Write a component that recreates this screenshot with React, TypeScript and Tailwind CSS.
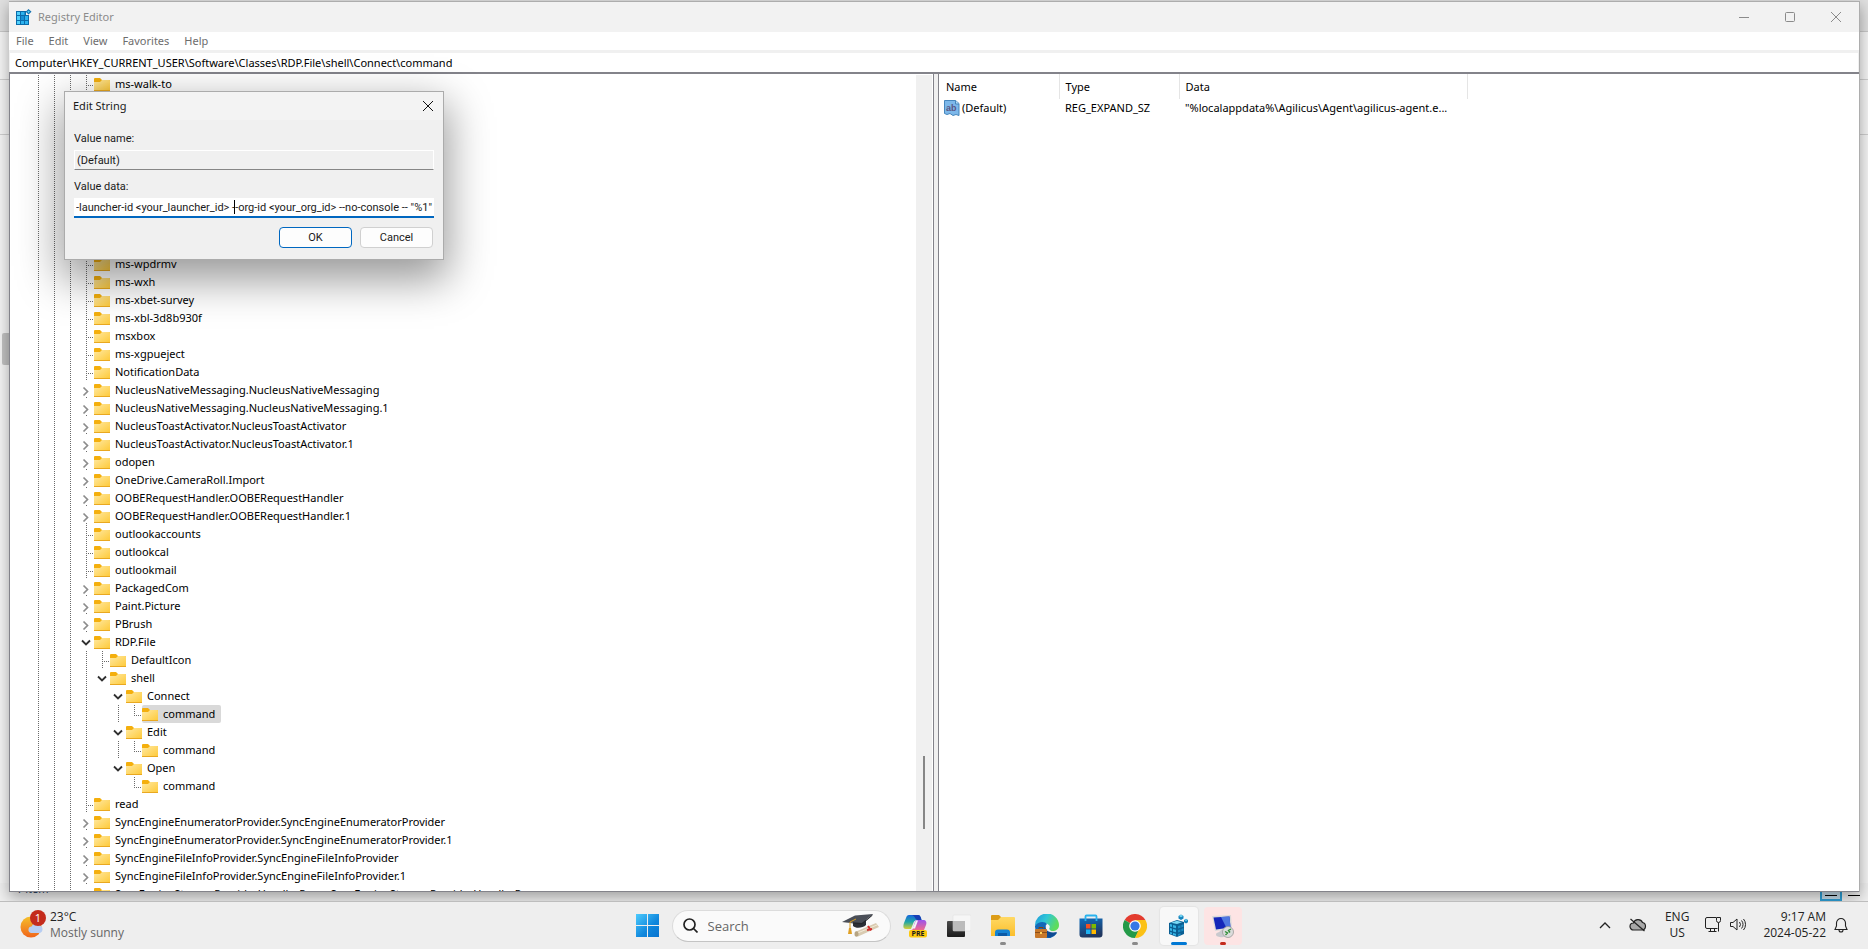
import { ReactNode } from "react";

type Branch = "leaf" | "last" | "closed" | "open";

interface TreeItem {
  name: string;
  branch?: Branch;
  // guide line under each ancestor between the root guides and this item
  guides?: boolean[];
  selected?: boolean;
}

const treeItems: TreeItem[] = [
  { name: "ms-walk-to" },
  ...Array.from({ length: 9 }, () => ({ name: "" })),
  { name: "ms-wpdrmv" },
  { name: "ms-wxh" },
  { name: "ms-xbet-survey" },
  { name: "ms-xbl-3d8b930f" },
  { name: "msxbox" },
  { name: "ms-xgpueject" },
  { name: "NotificationData" },
  { name: "NucleusNativeMessaging.NucleusNativeMessaging", branch: "closed" },
  { name: "NucleusNativeMessaging.NucleusNativeMessaging.1", branch: "closed" },
  { name: "NucleusToastActivator.NucleusToastActivator", branch: "closed" },
  { name: "NucleusToastActivator.NucleusToastActivator.1", branch: "closed" },
  { name: "odopen", branch: "closed" },
  { name: "OneDrive.CameraRoll.Import", branch: "closed" },
  { name: "OOBERequestHandler.OOBERequestHandler", branch: "closed" },
  { name: "OOBERequestHandler.OOBERequestHandler.1", branch: "closed" },
  { name: "outlookaccounts" },
  { name: "outlookcal" },
  { name: "outlookmail" },
  { name: "PackagedCom", branch: "closed" },
  { name: "Paint.Picture", branch: "closed" },
  { name: "PBrush", branch: "closed" },
  { name: "RDP.File", branch: "open" },
  { name: "DefaultIcon", guides: [true] },
  { name: "shell", branch: "open", guides: [true] },
  { name: "Connect", branch: "open", guides: [true, false] },
  { name: "command", branch: "last", guides: [true, false, true], selected: true },
  { name: "Edit", branch: "open", guides: [true, false] },
  { name: "command", branch: "last", guides: [true, false, true] },
  { name: "Open", branch: "open", guides: [true, false] },
  { name: "command", branch: "last", guides: [true, false, false] },
  { name: "read" },
  { name: "SyncEngineEnumeratorProvider.SyncEngineEnumeratorProvider", branch: "closed" },
  { name: "SyncEngineEnumeratorProvider.SyncEngineEnumeratorProvider.1", branch: "closed" },
  { name: "SyncEngineFileInfoProvider.SyncEngineFileInfoProvider", branch: "closed" },
  { name: "SyncEngineFileInfoProvider.SyncEngineFileInfoProvider.1", branch: "closed" },
  { name: "SyncEngineStorageProviderHandlerProxy.SyncEngineStorageProviderHandlerProxy", branch: "closed" },
];

const menus = ["File", "Edit", "View", "Favorites", "Help"];

// one pixel on, one pixel off
const dotsDown = "w-px bg-[repeating-linear-gradient(to_bottom,#6a6a6a_0_1px,transparent_1px_2px)]";
const dotsAcross = "h-px bg-[repeating-linear-gradient(to_right,#6a6a6a_0_1px,transparent_1px_2px)]";

function FolderIcon() {
  return (
    <svg width="16" height="13" viewBox="0 0 16 13" className="shrink-0">
      <defs>
        <linearGradient id="folder" x1="0" y1="0" x2="1" y2="1">
          <stop offset="0" stopColor="#ffe9a2" />
          <stop offset="1" stopColor="#fec937" />
        </linearGradient>
      </defs>
      <path d="M0 1a1 1 0 0 1 1-1h5l2 2h8v3H0z" fill="#f4af0d" />
      <path d="M0 4h6l2-2h7.500a.5.5 0 0 1 .5.5V13H0z" fill="url(#folder)" />
      <path d="M0 12h16v1H0z" fill="#e9a820" />
    </svg>
  );
}

function Guide({ show }: { show: boolean }) {
  return (
    <span className="w-4 shrink-0 self-stretch pl-2">
      {show && <span className={`block h-full ${dotsDown}`} />}
    </span>
  );
}

function BranchMark({ branch }: { branch: Branch }) {
  if (branch === "closed") {
    return (
      <span className="flex w-4 shrink-0 flex-col items-center self-stretch pt-1">
        <svg width="8" height="12" viewBox="0 0 8 12" fill="none" stroke="#8c8c8c" strokeWidth="1.700">
          <path d="M1.500 2.500 5.500 6.500 1.500 10.500" />
        </svg>
        <span className="ml-px h-px w-px bg-[#6a6a6a]" />
      </span>
    );
  }
  if (branch === "open") {
    return (
      <span className="flex w-4 shrink-0 items-center justify-center self-stretch">
        <svg width="10" height="8" viewBox="0 0 10 8" fill="none" stroke="#303030" strokeWidth="1.800">
          <path d="M1 2.500 5 6.500 9 2.500" />
        </svg>
      </span>
    );
  }
  return (
    <span className="flex w-4 shrink-0 self-stretch pl-2">
      <span className={`${dotsDown} ${branch === "last" ? "h-[11px]" : "h-full"}`} />
      <span className={`mt-2.5 ml-px w-[5px] ${dotsAcross}`} />
    </span>
  );
}

function TreeRow({ item }: { item: TreeItem }) {
  const guides = [true, true, true, ...(item.guides ?? [])];
  return (
    <li className="flex h-[18px] items-center pl-5">
      {guides.map((show, i) => (
        <Guide key={i} show={show} />
      ))}
      <BranchMark branch={item.branch ?? "leaf"} />
      <span
        className={`flex h-[18px] items-center gap-[5px] rounded-xs pr-1.5 whitespace-nowrap ${
          item.selected ? "bg-[#d9d9d9]" : ""
        }`}
      >
        <FolderIcon />
        {item.name}
      </span>
    </li>
  );
}

function RegeditIcon() {
  return (
    <svg width="16" height="16" viewBox="0 0 16 16">
      <path d="M0 2h10v4h3v10H0z" fill="#0a6cab" />
      <path d="M1 3h3v3H1zM1 7h3v4H1zM1 12h3v3H1z" fill="#4fd0fb" />
      <path d="M5 3h3.500v3H5zM5 12h3v3H5zM9 12h3v3H9zM9 7h3v4H9z" fill="#2cb2ee" />
      <path d="M5 7h3v4H5z" fill="#1590d6" />
      <path d="M12.500 0 15.500 2.700 12.500 5.500 9.700 2.700z" fill="#0f6fae" />
      <path d="M12.500 1.400 14 2.700 12.500 4.100 11.200 2.700z" fill="#4fd0fb" />
    </svg>
  );
}

function TitleBar() {
  return (
    <div className="flex h-[30px] items-center bg-[#f2f2f2] pl-[7px] text-[#8b8b8b]">
      <RegeditIcon />
      <h1 className="pl-1.5">Registry Editor</h1>
      <div className="ml-auto flex self-stretch">
        <button aria-label="Minimize" className="flex w-[46px] items-center justify-center">
          <svg width="10" height="10" fill="none" stroke="currentColor"><path d="M0 5.500h10" /></svg>
        </button>
        <button aria-label="Maximize" className="flex w-[46px] items-center justify-center">
          <svg width="10" height="10" fill="none" stroke="currentColor"><rect x=".5" y=".5" width="9" height="9" rx="1" /></svg>
        </button>
        <button aria-label="Close" className="flex w-[46px] items-center justify-center">
          <svg width="10" height="10" fill="none" stroke="currentColor"><path d="m0 0 10 10M10 0 0 10" /></svg>
        </button>
      </div>
    </div>
  );
}

function StringValueIcon() {
  return (
    <svg width="16" height="16" viewBox="0 0 16 16" className="shrink-0">
      <path d="M.5.500h11l3.500 3v12l-3-1-3 1-3-2-3 1-2.500-1z" fill="#7db8ea" stroke="#4787bd" />
      <path d="M11.500.500v3.500H15" fill="#b7dbf7" stroke="#4787bd" />
      <text x="2" y="11" fontSize="9" fontWeight="700" fill="#5a5685" fontFamily="Liberation Sans, sans-serif">ab</text>
    </svg>
  );
}

function ValueList() {
  return (
    <section className="min-w-0 flex-1 overflow-hidden border-l border-[#83838a] bg-white pl-px">
      <table className="w-[528px] table-fixed border-collapse text-left">
        <thead>
          <tr className="h-[25px]">
            <th className="w-[119px] border-r border-[#e5e5e5] px-1.5 font-normal">Name</th>
            <th className="w-[120px] border-r border-[#e5e5e5] px-1.5 font-normal">Type</th>
            <th className="border-r border-[#e5e5e5] px-1.5 font-normal">Data</th>
          </tr>
        </thead>
        <tbody>
          <tr className="h-[18px]">
            <td className="px-1">
              <span className="flex items-center gap-0.5">
                <StringValueIcon />
                (Default)
              </span>
            </td>
            <td className="px-1.5">REG_EXPAND_SZ</td>
            <td className="px-1.5 whitespace-nowrap">"%localappdata%\Agilicus\Agent\agilicus-agent.e...</td>
          </tr>
        </tbody>
      </table>
    </section>
  );
}

function RegistryWindow() {
  return (
    <main className="relative mr-2 ml-[9px] mt-px flex min-h-0 flex-1 flex-col border-t border-r border-[#adadad] bg-[#f0f0f0] shadow-[0_5px_14px_rgba(0,0,0,0.35)]">
      <TitleBar />
      <nav className="flex h-[18px] items-center gap-[15px] bg-white px-[7px] text-[#6d6d6d]">
        {menus.map((menu) => (
          <button key={menu}>{menu}</button>
        ))}
      </nav>
      <input
        aria-label="Address"
        readOnly
        value="Computer\HKEY_CURRENT_USER\Software\Classes\RDP.File\shell\Connect\command"
        className="mt-[3px] mr-px ml-px h-[19px] bg-white px-[5px] outline-none"
      />
      <div className="flex min-h-0 flex-1 gap-1 border-t-2 border-b border-[#83838a]">
        <section className="flex w-1/2 border-x border-[#83838a] bg-white pt-px">
          <ul className="min-w-0 flex-1 overflow-hidden">
            {treeItems.map((item, i) => (
              <TreeRow key={i} item={item} />
            ))}
          </ul>
          <div className="mr-px w-4 bg-[#f0f0f0] pt-[681px]">
            <div className="mx-auto h-[73px] w-0.5 bg-[#868686]" />
          </div>
        </section>
        <ValueList />
      </div>
    </main>
  );
}

function EditStringDialog() {
  return (
    <div
      role="dialog"
      aria-label="Edit String"
      className="absolute top-[91px] left-16 w-[380px] border border-[#ababab] bg-[#f0f0f0] pb-[11px] font-[Roboto,Arial,sans-serif] text-[11px] leading-4 text-[#1a1a1a] shadow-[0_16px_40px_4px_rgba(0,0,0,0.4)]"
    >
      <div className="flex h-7 items-center justify-between bg-[#f3f3f3] pr-2.5 pl-2">
        <h2 className="font-['Noto_Sans','Open_Sans',sans-serif]">Edit String</h2>
        <button aria-label="Close dialog">
          <svg width="10" height="10" fill="none" stroke="#111"><path d="m0 0 10 10M10 0 0 10" /></svg>
        </button>
      </div>
      <form className="flex flex-col px-[9px] pt-[11px]" onSubmit={(e) => e.preventDefault()}>
        <label htmlFor="value-name">Value name:</label>
        <input
          id="value-name"
          readOnly
          value="(Default)"
          className="mt-[3px] h-5 border border-white border-b-[#868686] bg-[#f0f0f0] px-0.5 outline-none"
        />
        <label htmlFor="value-data" className="mt-[9px]">Value data:</label>
        <div className="relative mt-[3px]">
          <input
            id="value-data"
            readOnly
            value={'-launcher-id <your_launcher_id> --org-id <your_org_id> --no-console -- "%1"'}
            className="h-5 w-full border-b-2 border-[#0067c0] bg-white pl-0.5 outline-none"
          />
          <span className="absolute top-0.5 left-40 h-3.5 w-px bg-black" />
        </div>
        <div className="mt-[9px] mr-px flex justify-end gap-2">
          <button className="h-[21px] w-[73px] rounded border border-[#0067c0] bg-[#fdfdfd]">OK</button>
          <button className="h-[21px] w-[73px] rounded border border-[#d0d0d0] bg-[#fdfdfd]">Cancel</button>
        </div>
      </form>
    </div>
  );
}

// Explorer window that peeks out around the registry editor
function BackdropWindow() {
  return (
    <div className="absolute inset-0 bottom-12 flex flex-col bg-[#f5f5f5]">
      <div className="h-8 border-b border-[#c8c8c8] bg-[#e0e0e0]" />
      <div className="h-12 border-b border-[#cfcfcf]" />
      <div className="h-[55px] border-b border-[#cfcfcf]" />
      <div className="flex-1 pt-[198px] pl-0.5">
        <div className="h-8 w-4 rounded-l-xs bg-[#c2c2c2]" />
      </div>
      <div className="flex h-[18px] items-end justify-between bg-[#f0f0f0] pr-2 pl-4">
        <span className="h-5 leading-4 text-[#1c3a5e]">1 item</span>
        <span className="flex">
          <span className="h-[18px] w-[22px] border-2 border-[#2e9fd6] bg-[#c6dcea] pt-2.5">
            <span className="mx-auto block h-px w-3 bg-black" />
          </span>
          <span className="ml-1.5 h-[13px] w-3 border-b border-black" />
        </span>
      </div>
    </div>
  );
}

function WeatherIcon() {
  return (
    <svg width="26" height="30" viewBox="0 0 26 30">
      <defs>
        <linearGradient id="sun" x1="0" y1="0" x2="0" y2="1">
          <stop offset="0" stopColor="#f5c02c" />
          <stop offset="1" stopColor="#f0641a" />
        </linearGradient>
      </defs>
      <circle cx="11" cy="17" r="10.500" fill="url(#sun)" />
      <path d="M11 23a3.300 3.300 0 0 1 .5-6.500 4.500 4.500 0 0 1 8-1 3.800 3.800 0 0 1-.5 7.500z" fill="#b7cdf2" />
      <circle cx="18" cy="8" r="8" fill="#c42b1c" />
      <text x="18" y="12" fontSize="11" textAnchor="middle" fill="#fff" fontFamily="Open Sans, sans-serif">1</text>
    </svg>
  );
}

function StartIcon() {
  return (
    <svg width="23" height="23" viewBox="0 0 23 23">
      <defs>
        <linearGradient id="start" x1="0" y1="0" x2="23" y2="23" gradientUnits="userSpaceOnUse">
          <stop offset="0" stopColor="#4ccbfd" />
          <stop offset=".6" stopColor="#0f86dc" />
          <stop offset="1" stopColor="#0a74cf" />
        </linearGradient>
      </defs>
      <path d="M0 0h11v11H0zM12 0h11v11H12zM0 12h11v11H0zM12 12h11v11H12z" fill="url(#start)" />
    </svg>
  );
}

function GraduationIcon() {
  return (
    <svg width="38" height="24" viewBox="0 0 38 24">
      <path d="M11 7v5c3 3 10 2 13-1V6z" fill="#2c2f36" />
      <path d="M0 8 13 1.500 31 0 20 9z" fill="#4a4e57" />
      <path d="m0 8 20 1 11-9-1 2-10 8.500z" fill="#24262c" />
      <path d="M14 5 8 8v6" fill="none" stroke="#d79b1e" />
      <path d="m7 14-1 6h4l-1-6z" fill="#e0a024" />
      <path d="m13 18 21-9 3 4-21 9.500z" fill="#d9cbb1" />
      <path d="m13 20 22-9" stroke="#f3ead8" />
      <ellipse cx="14.500" cy="20" rx="2" ry="2.800" fill="#b6a483" />
      <path d="m26 12 3 4.500M25 16l5-1" stroke="#d22f2f" strokeWidth="2" />
    </svg>
  );
}

function CopilotIcon() {
  return (
    <svg width="24" height="24" viewBox="0 0 24 24">
      <defs>
        <linearGradient id="cop-a" x1="0" y1="0" x2="0" y2="1">
          <stop offset="0" stopColor="#1767dd" />
          <stop offset=".5" stopColor="#21a7a5" />
          <stop offset="1" stopColor="#d9cf35" />
        </linearGradient>
        <linearGradient id="cop-b" x1="0" y1="0" x2="0" y2="1">
          <stop offset="0" stopColor="#9a54ee" />
          <stop offset="1" stopColor="#f06b8c" />
        </linearGradient>
      </defs>
      <path d="M6 1h9c2 0 3 2 3.500 5H14c-2 0-3 1-4 4l-2 5H3c-3 0-3-3-2-6l2-5c.5-2 1.500-3 3-3z" fill="url(#cop-a)" />
      <path d="M9 1h6c2 0 3 2 3.500 5H14c-2-1-2-4-5-5z" fill="#173fb5" />
      <path d="M14 6h6c3 0 4 2 3 5l-2 5H8c2 0 2-2 3-5 .8-3 1.500-5 3-5z" fill="url(#cop-b)" />
      <path d="m11.500 10 1.500-3.500h2l-3 8H9.500z" fill="#f4f4f8" />
      <rect x="6" y="16" width="18" height="7.500" rx="2" fill="#fdc90f" />
      <text x="15" y="22.300" fontSize="7" fontWeight="700" textAnchor="middle" fill="#1b1b1b" fontFamily="Open Sans, sans-serif">PRE</text>
    </svg>
  );
}

function TaskViewIcon() {
  return (
    <svg width="24" height="24" viewBox="0 0 24 24">
      <defs>
        <linearGradient id="tv" x1="0" y1="0" x2="0" y2="1">
          <stop offset="0" stopColor="#4a4a4a" />
          <stop offset="1" stopColor="#1c1c1c" />
        </linearGradient>
      </defs>
      <rect x="0" y="7" width="18" height="16" rx="1" fill="url(#tv)" />
      <rect x="6" y="1" width="18" height="16" rx="1" fill="#f6f6f6" stroke="#dcdcdc" strokeWidth=".5" />
      <path d="M6 7h12v10H6z" fill="#bcbcbc" />
    </svg>
  );
}

function ExplorerIcon() {
  return (
    <svg width="24" height="24" viewBox="0 0 24 24">
      <defs>
        <linearGradient id="exp" x1="0" y1="0" x2="0" y2="1">
          <stop offset="0" stopColor="#ffd964" />
          <stop offset="1" stopColor="#fbbe2c" />
        </linearGradient>
      </defs>
      <path d="M0 2a1 1 0 0 1 1-1h7l2 2v4H0z" fill="#dc9c17" />
      <path d="M0 6h7l3-3h13a1 1 0 0 1 1 1v18H0z" fill="url(#exp)" />
      <path d="M4 22v-3.500a3 3 0 0 1 3-3h9a3 3 0 0 1 3 3V22z" fill="#1583d3" />
      <path d="M7 19h9v3H7z" fill="#0c5aa5" />
    </svg>
  );
}

function EdgeIcon() {
  return (
    <svg width="24" height="24" viewBox="0 0 24 24">
      <defs>
        <linearGradient id="edge" x1="0" y1="0" x2="1" y2=".4">
          <stop offset="0" stopColor="#1d97db" />
          <stop offset=".5" stopColor="#30c7d6" />
          <stop offset="1" stopColor="#5fdc5c" />
        </linearGradient>
      </defs>
      <path d="M0 12A12 12 0 0 1 24 11c0 4-3 6-6.500 6-3 0-4-1.500-3-3.500C15 9 6 7 0 12z" fill="url(#edge)" />
      <path d="M0 12c3-5 10-5 12-2-3 2-2 8 3 10l7-1A12 12 0 0 1 0 12z" fill="#1268b8" />
      <path d="M11 11c-2 4 2 9 11 7-1 3-5 5.500-9 5.500-4-3-5-9-2-12.500z" fill="#0e4b93" />
      <path d="M11.500 12.500c0-2.500 3.500-2 3 .5-1 2 0 3.500 2 4-3 .5-5-1.500-5-4.500z" fill="#f2f6f8" />
      <rect x="0" y="15" width="12" height="9" rx="1" fill="#c8782a" />
      <path d="M4 15v-1.500h4V15" fill="none" stroke="#7b4312" />
      <path d="M0 18.500h12" stroke="#8c4e17" />
      <path d="M5 18h2v2H5z" fill="#ffd45b" />
    </svg>
  );
}

function StoreIcon() {
  return (
    <svg width="24" height="24" viewBox="0 0 24 24">
      <defs>
        <linearGradient id="store" x1="0" y1="0" x2=".3" y2="1">
          <stop offset="0" stopColor="#0f6fc0" />
          <stop offset="1" stopColor="#20365f" />
        </linearGradient>
      </defs>
      <path d="M.5 4.500h23v16a3 3 0 0 1-3 3h-17a3 3 0 0 1-3-3z" fill="url(#store)" />
      <path d="M6.500 7V2.500a1 1 0 0 1 1-1h9a1 1 0 0 1 1 1V7" fill="none" stroke="#28b2ee" strokeWidth="1.800" />
      <path d="M7 10h4.500v4.500H7z" fill="#f25022" />
      <path d="M12.500 10H17v4.500h-4.500z" fill="#7fba00" />
      <path d="M7 15.500h4.500V20H7z" fill="#1db1f2" />
      <path d="M12.500 15.500H17V20h-4.500z" fill="#ffb900" />
    </svg>
  );
}

function ChromeIcon() {
  return (
    <svg width="24" height="24" viewBox="0 0 24 24">
      <path d="M12 12 1.600 6A12 12 0 0 1 22.400 6z" fill="#e33b2e" />
      <path d="M12 12 1.600 6A12 12 0 0 0 12 24l5.200-9z" fill="#249a48" />
      <path d="M12 12h5.200L12 24A12 12 0 0 0 22.400 6H12z" fill="#fbc116" />
      <circle cx="12" cy="12" r="5.800" fill="#fff" />
      <circle cx="12" cy="12" r="4.600" fill="#3578e5" />
    </svg>
  );
}

function RegeditCubeIcon() {
  return (
    <svg width="24" height="24" viewBox="0 0 24 24">
      <path d="m2 9 8-3 7 2v12l-7 3-8-3z" fill="#0b5f93" />
      <path d="m3 10 2 .5v2.500l-2-.5zM6 11l3 .8v2.400l-3-.7zM3 14l2 .5V17l-2-.5zM6 15l3 .8v2.400l-3-.7zM3 18l2 .5v1.700l-2-.5zM6 19l3 .8v1.900l-3-.8z" fill="#38b6e6" />
      <path d="m11 12 2.500-.8v2.500l-2.500.7zM14.300 11l2.200-.7v2.400l-2.200.8zM11 16l2.500-.8v2.500l-2.500.7zM14.300 15l2.200-.7v2.400l-2.200.8zM11 20l2.500-.8v2l-2.500.7z" fill="#1a8cc4" />
      <path d="m4 8.700 6-2 5 1.500-5 1.800z" fill="#7ad9f5" />
      <path d="m11.500 2 2.500-1.500L16.500 2v2.500L14 6l-2.500-1.500zM17 6l2-1.200L21 6v2.200l-2 1.200-2-1.200z" fill="#1584bd" />
      <path d="m12 2 2-1.200L16 2l-2 1.200zM17.500 6 19 5.200l1.500.8-1.500.9z" fill="#7ad9f5" />
    </svg>
  );
}

function RemoteDesktopIcon() {
  return (
    <svg width="24" height="24" viewBox="0 0 24 24">
      <path d="M5 20.500c0-2 4-2 5-4.500h6l1 6c-4 2-12 1.500-12-1.500z" fill="#c9c9ce" />
      <path d="m1 2 19-1 1 14-17 2z" fill="#dadada" />
      <path d="m2.500 3.500 16-1 1 11-14.500 2z" fill="#1526b9" />
      <path d="m10 3 8.500-.5 1 11-4 .5z" fill="#4f77e0" />
      <circle cx="17" cy="18" r="5.500" fill="#dcdcdc" stroke="#9b9b9b" strokeWidth=".8" />
      <path d="m14 17.500 2.500 1.500-2 2M20 15l-2.500 1.500 1.500 2" fill="none" stroke="#2f8f36" strokeWidth="1.400" />
    </svg>
  );
}

interface TaskButtonProps {
  label: string;
  children: ReactNode;
  tile?: string;
  indicator?: string;
}

function TaskButton({ label, children, tile = "", indicator = "" }: TaskButtonProps) {
  return (
    <button aria-label={label} className="relative flex w-11 items-center justify-center py-1">
      <span className={`flex h-[38px] w-[38px] items-center justify-center rounded ${tile}`}>{children}</span>
      <span className={`absolute bottom-1 h-[3px] rounded-full ${indicator}`} />
    </button>
  );
}

function Taskbar() {
  return (
    <footer className="relative grid h-12 grid-cols-[1fr_auto_1fr] items-center border-t border-[#bdbdbd] bg-[#eeeeee] font-['Open_Sans','Noto_Sans',sans-serif] text-[12px] leading-4 text-[#222]">
      <div className="flex items-center gap-1 pb-0.5 pl-5">
        <WeatherIcon />
        <div>
          <p>23°C</p>
          <p className="text-[#666]">Mostly sunny</p>
        </div>
      </div>

      <div className="flex items-center pl-0.5">
        <TaskButton label="Start"><StartIcon /></TaskButton>
        <label className="mx-0.5 flex h-8 w-[219px] items-center rounded-full border border-[#dcdcdc] border-b-[#c4c4c4] bg-[#fafafa] px-2.5">
          <svg width="15" height="15" fill="none" stroke="#222" strokeWidth="1.700">
            <circle cx="6.500" cy="6.500" r="5.500" />
            <path d="m10.500 10.500 4 4" />
          </svg>
          <input
            aria-label="Search"
            placeholder="Search"
            className="w-0 flex-1 bg-transparent pl-2.5 text-[13px] outline-none placeholder:text-[#666]"
          />
          <GraduationIcon />
        </label>
        <TaskButton label="Copilot"><CopilotIcon /></TaskButton>
        <TaskButton label="Task view"><TaskViewIcon /></TaskButton>
        <TaskButton label="File Explorer" indicator="w-1.5 bg-[#8a8a8a]"><ExplorerIcon /></TaskButton>
        <TaskButton label="Edge"><EdgeIcon /></TaskButton>
        <TaskButton label="Store"><StoreIcon /></TaskButton>
        <TaskButton label="Chrome" indicator="w-1.5 bg-[#8a8a8a]"><ChromeIcon /></TaskButton>
        <TaskButton label="Registry Editor" tile="bg-[#f8f8f8] shadow-[0_0_1px_1px_#e4e4e4]" indicator="w-4 bg-[#0078d4]">
          <RegeditCubeIcon />
        </TaskButton>
        <TaskButton label="Remote Desktop" tile="bg-[#fde4e4]" indicator="w-1.5 bg-[#c42b1c]">
          <RemoteDesktopIcon />
        </TaskButton>
      </div>

      <div className="flex items-center justify-end pr-5 pb-0.5">
        <button aria-label="Show hidden icons" className="mr-[18px]">
          <svg width="12" height="8" fill="none" stroke="#222" strokeWidth="1.300"><path d="m1 7 5-5 5 5" /></svg>
        </button>
        <button aria-label="OneDrive" className="mr-[18px]">
          <svg width="18" height="14" viewBox="0 0 18 14" fill="none" stroke="#222" strokeWidth="1.200">
            <path d="M4.500 12a3.500 3.500 0 0 1 0-7 4.800 4.800 0 0 1 9-.5 3.800 3.800 0 0 1-.5 7.500z" fill="#a8a8a8" />
            <path d="m1.500 1 14 12" />
          </svg>
        </button>
        <button className="mr-4 text-center">
          ENG
          <br />
          US
        </button>
        <button aria-label="Network" className="mr-2">
          <svg width="17" height="17" viewBox="0 0 17 17" fill="none" stroke="#222">
            <path d="M11 1.500H2A1.500 1.500 0 0 0 .5 3v8A1.500 1.500 0 0 0 2 12.500h10.500M5.500 12.500v3M9.500 12.500v3M3.500 15.500h8" />
            <path d="M11.500 1.500h4v3a2 2 0 0 1-4 0zM13.500 6.500v9" />
          </svg>
        </button>
        <button aria-label="Volume" className="mr-4">
          <svg width="17" height="15" viewBox="0 0 17 15" fill="none" stroke="#222">
            <path d="M.5 5.500v4h2.500l4 3.500V2L3 5.500zM9.500 5a4 4 0 0 1 0 5M11.500 3.500a6 6 0 0 1 0 8M13.500 2a8.500 8.500 0 0 1 0 11" />
          </svg>
        </button>
        <button className="mr-2 text-right">
          9:17 AM
          <br />
          2024-05-22
        </button>
        <button aria-label="Notifications">
          <svg width="14" height="16" viewBox="0 0 14 16" fill="none" stroke="#222" strokeWidth="1.100">
            <path d="M1 12.500h12L11.500 9V6a4.500 4.500 0 0 0-9 0v3zM5 13a2 2 0 0 0 4 0" />
          </svg>
        </button>
      </div>
    </footer>
  );
}

export default function App() {
  return (
    <div className="relative flex h-screen flex-col overflow-hidden font-['Noto_Sans','Open_Sans',sans-serif] text-[11px] leading-4 text-black">
      <BackdropWindow />
      <RegistryWindow />
      <div className="h-[9px]" />
      <Taskbar />
      <EditStringDialog />
    </div>
  );
}
